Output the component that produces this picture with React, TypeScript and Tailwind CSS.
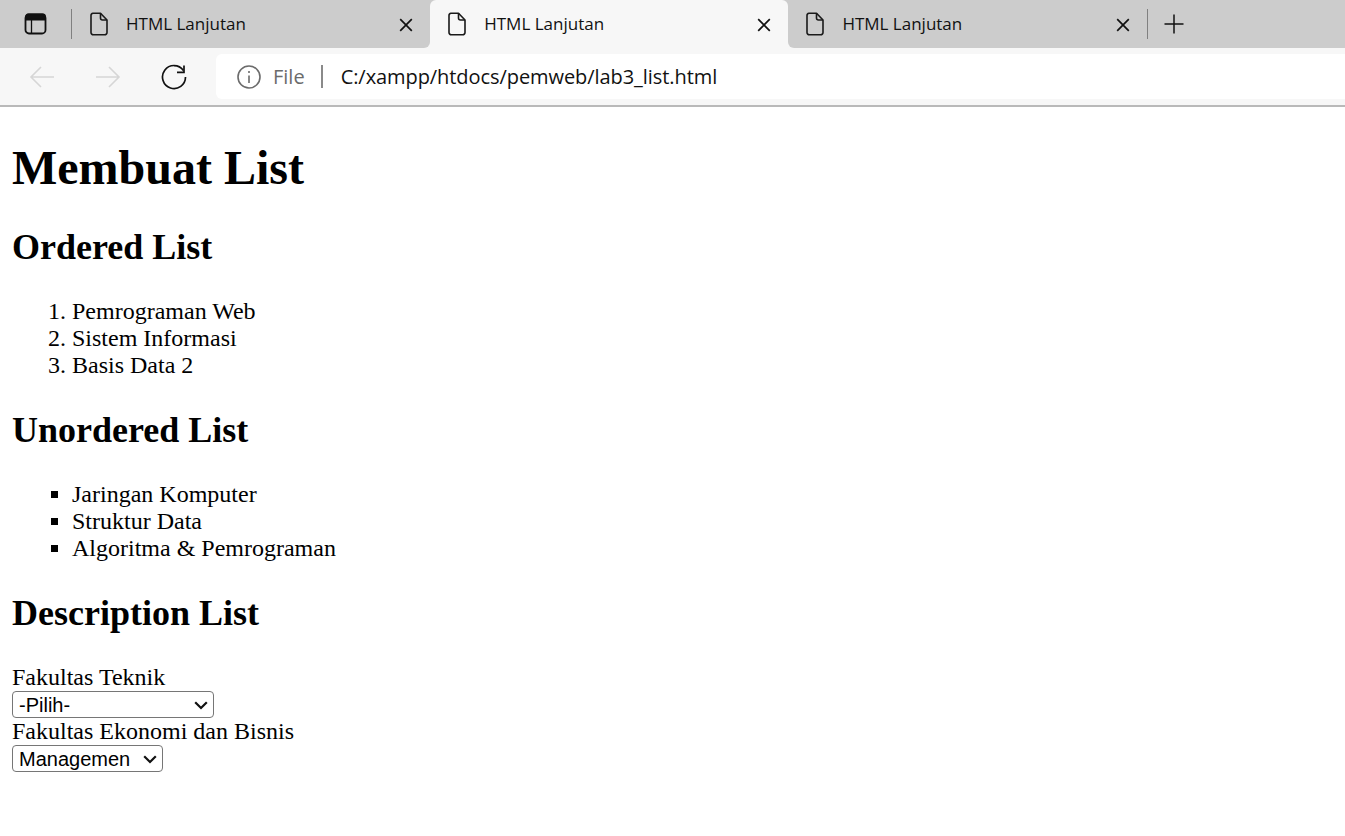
const PageIcon = () => (
  <svg width="18" height="24" viewBox="0 0 18 24" fill="none" stroke="#1a1a1a" strokeWidth="1.6" strokeLinejoin="round">
    <path d="M3 1.2h7.5L17 8v12.5a2.3 2.3 0 0 1-2.3 2.3H3.3A2.3 2.3 0 0 1 1 20.5V3.5A2.3 2.3 0 0 1 3 1.2z" />
    <path d="M10.5 1.2V6a2 2 0 0 0 2 2H17" />
  </svg>
);

const CloseIcon = () => (
  <svg width="14" height="14" viewBox="0 0 14 14" fill="none" stroke="#111" strokeWidth="1.7">
    <path d="M1.2 1.2l11.6 11.6M12.8 1.2L1.2 12.8" />
  </svg>
);

const Chevron = () => (
  <svg className="pointer-events-none absolute top-[10px] right-[6px]" width="14" height="9" viewBox="0 0 14 9" fill="none" stroke="#111" strokeWidth="2.2">
    <path d="M1.2 1.2L7 7l5.8-5.8" />
  </svg>
);

const Tab = ({ active, className }: { active?: boolean; className: string }) => (
  <div className={`flex h-12 w-[358.2px] shrink-0 items-center pl-[18px] ${active ? "rounded-t-md bg-[#f7f7f7]" : className}`}>
    <PageIcon />
    <span className="ml-[18px] text-[17px] text-[#111]">HTML Lanjutan</span>
    <span className="mt-px ml-auto mr-[17px] flex">
      <CloseIcon />
    </span>
  </div>
);

const BrowserChrome = () => (
  <header className="font-['Open_Sans',sans-serif]">
    <div className="flex h-12 items-center bg-[#cccccc]">
      <div className="flex w-[70.5px] shrink-0 justify-center pl-[1.5px]">
        <svg width="24" height="22" viewBox="0 0 24 22" fill="none" stroke="#111" strokeWidth="1.8">
          <rect x="1.5" y="1.5" width="20" height="19" rx="3.5" />
          <path d="M2 3.5a2 2 0 0 1 2-2h15a2 2 0 0 1 2 2V6.5H2z" fill="#111" />
          <path d="M7.5 7v13" strokeWidth="1.3" />
        </svg>
      </div>
      <div className="h-[30px] w-[1.5px] shrink-0 bg-[#808080]" />
      <div className="h-12 bg-[#f7f7f7]">
        <Tab className="rounded-br-md bg-[#cccccc]" />
      </div>
      <Tab active className="" />
      <div className="h-12 bg-[#f7f7f7]">
        <Tab className="rounded-bl-md bg-[#cccccc]" />
      </div>
      <div className="h-[30px] w-[1.5px] shrink-0 bg-[#808080]" />
      <div className="ml-[14.5px] flex">
        <svg width="22" height="22" viewBox="0 0 22 22" stroke="#111" strokeWidth="1.5">
          <path d="M11 1.5v19M1.5 11h19" />
        </svg>
      </div>
    </div>
    <div className="flex h-[57px] items-start bg-[#f7f7f7] pt-[6px]">
      <div className="flex h-[45px] w-[216px] shrink-0 items-center pl-[28px]">
        <svg width="28" height="24" viewBox="0 0 28 24" fill="none" stroke="#d6d6d6" strokeWidth="1.6">
          <path d="M26 12H3M13 2L3 12l10 10" />
        </svg>
        <svg className="ml-[38px]" width="28" height="24" viewBox="0 0 28 24" fill="none" stroke="#d6d6d6" strokeWidth="1.6">
          <path d="M2 12h23M15 2l10 10-10 10" />
        </svg>
        <svg className="ml-[39px]" width="26" height="26" viewBox="0 0 26 26" fill="none" stroke="#111" strokeWidth="1.7">
          <path d="M22.4 6.4A11.5 11.5 0 1 0 24.5 13" />
          <path d="M23 1.5v6.8h-7" />
        </svg>
      </div>
      <div className="flex h-[45px] flex-1 items-center rounded-l-md bg-white pl-[21px] text-[20px]">
        <svg width="24" height="24" viewBox="0 0 24 24" fill="none" stroke="#6b6b6b" strokeWidth="1.6">
          <circle cx="12" cy="12" r="11" />
          <path d="M12 10.5v7.5M12 6v2" />
        </svg>
        <span className="ml-[12px] text-[#6b6b6b]">File</span>
        <span className="ml-[16.5px] h-[23px] w-[2px] bg-[#8a8a8a]" />
        <span className="ml-[17.5px] text-[#111] tracking-[-0.07px]">C:/xampp/htdocs/pemweb/lab3_list.html</span>
      </div>
    </div>
    <div className="h-[2px] bg-[#b9b9b9]" />
  </header>
);

export default function App() {
  return (
    <div className="min-h-[836px] bg-white">
      <BrowserChrome />
      <main className="px-3 font-['Liberation_Serif',serif] text-[24px] leading-[27px] text-black">
        <h1 className="pt-[33px] pb-[31px] text-[48px] leading-[55px] font-bold">Membuat List</h1>
        <h2 className="text-[36px] leading-[42px] font-bold">Ordered List</h2>
        <ol className="my-[30px] list-decimal pl-[60px]">
          <li>Pemrograman Web</li>
          <li>Sistem Informasi</li>
          <li>Basis Data 2</li>
        </ol>
        <h2 className="text-[36px] leading-[42px] font-bold">Unordered List</h2>
        <ul className="my-[30px] list-[square] pl-[60px]">
          <li>Jaringan Komputer</li>
          <li>Struktur Data</li>
          <li>Algoritma &amp; Pemrograman</li>
        </ul>
        <h2 className="text-[36px] leading-[42px] font-bold">Description List</h2>
        <div className="mt-[30px]">
          <div>Fakultas Teknik</div>
          <div className="relative h-[27px] w-[202px]">
            <select className="block h-[27px] w-full appearance-none rounded-[4px] border border-[#767676] bg-white pt-px pl-[6px] font-['Liberation_Sans',sans-serif] text-[20px] leading-[23px]">
              <option>-Pilih-</option>
            </select>
            <Chevron />
          </div>
          <div>Fakultas Ekonomi dan Bisnis</div>
          <div className="relative h-[27px] w-[151px]">
            <select className="block h-[27px] w-full appearance-none rounded-[4px] border border-[#767676] bg-white pt-px pl-[6px] font-['Liberation_Sans',sans-serif] text-[20px] leading-[23px]">
              <option>Managemen</option>
            </select>
            <Chevron />
          </div>
        </div>
      </main>
    </div>
  );
}
